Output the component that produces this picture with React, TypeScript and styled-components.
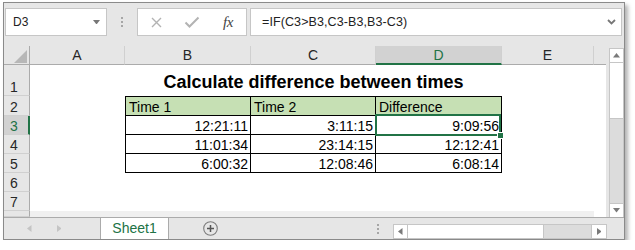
import React from "react";
import styled, { createGlobalStyle } from "styled-components";

const GREEN = "#217346";
const HEAD_BG = "#e6e6e6";
const HEAD_LINE = "#ababab";
const SEP = "#d0d0d0";
const BOX_LINE = "#c6c6c6";

const Global = createGlobalStyle`
  html, body { margin: 0; padding: 0; background: #fff; }
  body { font-family: "Liberation Sans", Arial, sans-serif; }
  * { box-sizing: border-box; }
`;

const Window = styled.div`
  margin: 2px 0 0 3px;
  width: 622px;
  height: 238px;
  border: 1px solid #8a8a8a;
  background: ${HEAD_BG};
  box-shadow: 3px 3px 4px rgba(0, 0, 0, 0.3);
  display: flex;
  flex-direction: column;
  overflow: hidden;
`;

/* ---------- formula bar ---------- */
const FormulaBar = styled.div`
  height: 43px;
  flex: none;
  display: flex;
  align-items: flex-start;
  padding: 5px 2px 0 1px;
`;

const Box = styled.div`
  height: 28px;
  background: #fff;
  border: 1px solid ${BOX_LINE};
  display: flex;
  align-items: center;
`;

const NameBox = styled(Box)`
  width: 102px;
  justify-content: space-between;
  padding: 0 6px 0 7px;
  font-size: 12px;
  color: #222;
`;

const Grip = styled.div<{ $w: number; $h: number }>`
  width: ${(p) => p.$w}px;
  height: ${(p) => p.$h}px;
  flex: none;
  display: flex;
  flex-direction: column;
  align-items: center;
  justify-content: center;
  gap: 2px;
`;

const Dot = styled.span`
  width: 2px;
  height: 2px;
  background: #a6a6a6;
`;

const FxBox = styled(Box)`
  width: 110px;
  display: grid;
  grid-template-columns: 37px 33px 40px;
  align-items: center;
  justify-items: center;
`;

const FxText = styled.span`
  font-family: "Liberation Serif", "Times New Roman", serif;
  font-style: italic;
  font-size: 15px;
  color: #444;
  letter-spacing: -0.5px;
`;

const FormulaInput = styled(Box)`
  width: 372px;
  margin-left: 3px;
  justify-content: space-between;
  padding: 0 5px 0 11px;
  font-size: 12.5px;
  letter-spacing: 0.1px;
  color: #222;
`;

/* ---------- sheet ---------- */
const Main = styled.div`
  height: 171px;
  flex: none;
  display: flex;
`;

const Sheet = styled.div`
  width: 602px;
  display: grid;
  grid-template-columns: 26px 95px 126px 125px 126px 92px 12px;
  grid-template-rows: 19px 31px 20px 19px 19px 19px 19px 19px 6px;
  background: #fff;
  overflow: hidden;
`;

const Corner = styled.div`
  background: ${HEAD_BG};
  border-right: 1px solid ${HEAD_LINE};
  border-bottom: 1px solid ${HEAD_LINE};
  display: flex;
  justify-content: flex-end;
  align-items: flex-end;
  padding: 0 2px 1px 0;
`;

const ColHeader = styled.div<{ $active?: boolean; $last?: boolean }>`
  background: ${(p) => (p.$active ? "#d2d2d2" : HEAD_BG)};
  border-right: ${(p) => (p.$last ? "none" : `1px solid ${SEP}`)};
  border-bottom: ${(p) => (p.$active ? `2px solid ${GREEN}` : `1px solid ${HEAD_LINE}`)};
  display: flex;
  align-items: center;
  justify-content: center;
  font-size: 14px;
  line-height: 16px;
  color: ${(p) => (p.$active ? GREEN : "#262626")};
`;

const RowHeader = styled.div<{ $active?: boolean }>`
  grid-column: 1;
  background: ${(p) => (p.$active ? "#d2d2d2" : HEAD_BG)};
  border-right: ${(p) => (p.$active ? `2px solid ${GREEN}` : `1px solid ${HEAD_LINE}`)};
  border-bottom: 1px solid ${SEP};
  display: flex;
  align-items: flex-end;
  padding-left: 6px;
  font-size: 14px;
  line-height: 16px;
  color: ${(p) => (p.$active ? GREEN : "#262626")};
  overflow: hidden;
`;

const Title = styled.div`
  grid-column: 3 / 6;
  grid-row: 2;
  display: flex;
  justify-content: center;
  align-items: flex-end;
  padding-bottom: 3px;
  font-size: 18px;
  line-height: 21px;
  font-weight: bold;
  color: #000;
  white-space: nowrap;
`;

const TableBlock = styled.div`
  grid-column: 3 / 6;
  grid-row: 3 / 7;
  display: grid;
  grid-template-columns: 125px 125px 126px;
  grid-template-rows: repeat(4, 19px);
  border-left: 1px solid #000;
  border-top: 1px solid #000;
`;

const TCell = styled.div<{ $head?: boolean; $selected?: boolean }>`
  position: ${(p) => (p.$selected ? "relative" : "static")};
  border-right: 1px solid #000;
  border-bottom: 1px solid #000;
  background: ${(p) => (p.$head ? "#c6e0b4" : "#fff")};
  display: flex;
  align-items: flex-end;
  justify-content: ${(p) => (p.$head ? "flex-start" : "flex-end")};
  padding: 0 2px 0 3px;
  font-size: 14px;
  line-height: 16px;
  color: #000;
  white-space: nowrap;
`;

const Selection = styled.div`
  position: absolute;
  z-index: 2;
  top: -2px;
  left: -1px;
  right: 0;
  bottom: -2px;
  border: 2px solid ${GREEN};
  pointer-events: none;
`;

const FillHandle = styled.div`
  position: absolute;
  right: -5px;
  bottom: -5px;
  width: 7px;
  height: 7px;
  background: ${GREEN};
  border: 1px solid #fff;
`;

const Strip = styled.div`
  grid-column: 2 / 7;
  grid-row: 9;
  background: #f0f0f0;
`;

/* ---------- scrollbars ---------- */
const VScroll = styled.div`
  width: 15px;
  height: 169px;
  margin: 2px 0 0 3px;
  display: flex;
  flex-direction: column;
  background: #dcdcdc;
  border: 1px solid ${BOX_LINE};
  border-bottom: none;
`;

const ScrollBtn = styled.div<{ $edge: "top" | "bottom" | "left" | "right" }>`
  flex: none;
  background: #fff;
  display: flex;
  align-items: center;
  justify-content: center;
  ${(p) => (p.$edge === "top" || p.$edge === "bottom" ? "height: 14px;" : "width: 14px;")}
  ${(p) =>
    p.$edge === "top"
      ? `border-bottom: 1px solid ${BOX_LINE};`
      : p.$edge === "bottom"
      ? `border-top: 1px solid ${BOX_LINE};`
      : p.$edge === "left"
      ? `border-right: 1px solid ${BOX_LINE};`
      : `border-left: 1px solid ${BOX_LINE}; width: 15px;`}
`;

const VThumb = styled.div`
  flex: none;
  height: 56px;
  background: #fff;
  border-bottom: 1px solid ${BOX_LINE};
`;

const Track = styled.div`
  flex: 1;
`;

/* ---------- bottom bar ---------- */
const BottomBar = styled.div`
  height: 22px;
  flex: none;
  display: flex;
  border-top: 1px solid ${HEAD_LINE};
`;

const NavArea = styled.div`
  width: 97px;
  flex: none;
  border-right: 1px solid ${HEAD_LINE};
  display: flex;
  align-items: center;
  padding-left: 23px;
  gap: 25px;
`;

const SheetTab = styled.div`
  width: 68px;
  flex: none;
  background: #fff;
  border-right: 1px solid ${HEAD_LINE};
  display: flex;
  align-items: center;
  justify-content: center;
  color: ${GREEN};
  font-size: 14px;
  padding-bottom: 1px;
`;

const TabSpace = styled.div`
  width: 224px;
  flex: none;
  display: flex;
  align-items: center;
  padding: 0 14px 0 34px;
  justify-content: space-between;
`;

const HScroll = styled.div`
  width: 214px;
  height: 15px;
  margin-top: 6px;
  flex: none;
  display: flex;
  background: #dcdcdc;
  border: 1px solid ${BOX_LINE};
`;

const HThumb = styled.div`
  width: 136px;
  flex: none;
  background: #fff;
  border-right: 1px solid ${BOX_LINE};
`;

/* ---------- icons ---------- */
const Tri = ({ dir, color, size = 7 }: { dir: "up" | "down" | "left" | "right"; color: string; size?: number }) => {
  const h = Math.ceil(size / 2) + 0.5;
  const pts =
    dir === "up"
      ? `0,${h} ${size},${h} ${size / 2},0`
      : dir === "down"
      ? `0,0 ${size},0 ${size / 2},${h}`
      : dir === "left"
      ? `${h},0 ${h},${size} 0,${size / 2}`
      : `0,0 0,${size} ${h},${size / 2}`;
  const horiz = dir === "up" || dir === "down";
  return (
    <svg width={horiz ? size : h} height={horiz ? h : size} viewBox={`0 0 ${horiz ? size : h} ${horiz ? h : size}`}>
      <polygon points={pts} fill={color} />
    </svg>
  );
};

const cols = ["A", "B", "C", "D", "E"];
const rows: [string, string, string][] = [
  ["12:21:11", "3:11:15", "9:09:56"],
  ["11:01:34", "23:14:15", "12:12:41"],
  ["6:00:32", "12:08:46", "6:08:14"],
];

export default function App() {
  return (
    <>
      <Global />
      <Window>
        <FormulaBar>
          <NameBox>
            <span>D3</span>
            <Tri dir="down" color="#777" size={7} />
          </NameBox>
          <Grip $w={30} $h={28}>
            <Dot />
            <Dot />
            <Dot />
          </Grip>
          <FxBox>
            <svg width="11" height="11" viewBox="0 0 11 11">
              <path d="M1 1 L10 10 M10 1 L1 10" stroke="#b3b3b3" strokeWidth="1.4" />
            </svg>
            <svg width="16" height="12" viewBox="0 0 16 12">
              <path d="M1.5 6.5 L5.5 10.5 L14.5 1.5" stroke="#b3b3b3" strokeWidth="2" fill="none" />
            </svg>
            <FxText>fx</FxText>
          </FxBox>
          <FormulaInput>
            <span>=IF(C3&gt;B3,C3-B3,B3-C3)</span>
            <svg width="9" height="6" viewBox="0 0 9 6">
              <path d="M1 1 L4.5 4.5 L8 1" stroke="#777" strokeWidth="1.8" fill="none" />
            </svg>
          </FormulaInput>
        </FormulaBar>

        <Main>
          <Sheet>
            <Corner>
              <svg width="13" height="13" viewBox="0 0 13 13">
                <polygon points="13,0 13,13 0,13" fill="#b7b7b7" />
              </svg>
            </Corner>
            {cols.map((c) => (
              <ColHeader key={c} $active={c === "D"}>
                {c}
              </ColHeader>
            ))}
            <ColHeader $last />

            {[1, 2, 3, 4, 5, 6, 7].map((n) => (
              <RowHeader key={n} style={{ gridRow: n + 1 }} $active={n === 3}>
                {n}
              </RowHeader>
            ))}
            <RowHeader style={{ gridRow: 9 }} />

            <Title>Calculate difference between times</Title>

            <TableBlock>
              <TCell $head>Time 1</TCell>
              <TCell $head>Time 2</TCell>
              <TCell $head>Difference</TCell>
              {rows.map((r, i) =>
                r.map((v, j) => {
                  const selected = i === 0 && j === 2;
                  return (
                    <TCell key={`${i}-${j}`} $selected={selected}>
                      {v}
                      {selected && (
                        <Selection>
                          <FillHandle />
                        </Selection>
                      )}
                    </TCell>
                  );
                })
              )}
            </TableBlock>

            <Strip />
          </Sheet>

          <VScroll>
            <ScrollBtn $edge="top">
              <Tri dir="up" color="#7a7a7a" size={7} />
            </ScrollBtn>
            <VThumb />
            <Track />
            <ScrollBtn $edge="bottom">
              <Tri dir="down" color="#7a7a7a" size={7} />
            </ScrollBtn>
          </VScroll>
        </Main>

        <BottomBar>
          <NavArea>
            <Tri dir="left" color="#c4c4c4" size={7} />
            <Tri dir="right" color="#c4c4c4" size={7} />
          </NavArea>
          <SheetTab>Sheet1</SheetTab>
          <TabSpace>
            <svg width="15" height="15" viewBox="0 0 15 15">
              <circle cx="7.5" cy="7.5" r="6.8" fill="none" stroke="#7d7d7d" strokeWidth="1.1" />
              <path d="M7.5 4 V11 M4 7.5 H11" stroke="#555" strokeWidth="1.5" />
            </svg>
            <Grip $w={2} $h={14}>
              <Dot />
              <Dot />
              <Dot />
            </Grip>
          </TabSpace>
          <HScroll>
            <ScrollBtn $edge="left">
              <Tri dir="left" color="#7a7a7a" size={7} />
            </ScrollBtn>
            <HThumb />
            <Track />
            <ScrollBtn $edge="right">
              <Tri dir="right" color="#7a7a7a" size={7} />
            </ScrollBtn>
          </HScroll>
        </BottomBar>
      </Window>
    </>
  );
}
